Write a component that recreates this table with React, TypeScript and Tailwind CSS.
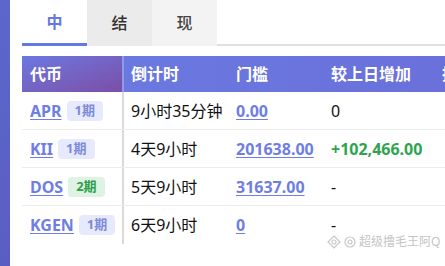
import React from 'react';

interface Row {
  token: string;
  phase: string;
  green?: boolean;
  countdown: string;
  threshold: string;
  change: string;
}

const rows: Row[] = [
  { token: 'APR', phase: '1期', countdown: '9小时35分钟', threshold: '0.00', change: '0' },
  { token: 'KII', phase: '1期', countdown: '4天9小时', threshold: '201638.00', change: '+102,466.00' },
  { token: 'DOS', phase: '2期', green: true, countdown: '5天9小时', threshold: '31637.00', change: '-' },
  { token: 'KGEN', phase: '1期', countdown: '6天9小时', threshold: '0', change: '-' },
];

const font = { fontFamily: '"Noto Sans", "Noto Sans CJK SC", sans-serif' };

const App: React.FC = () => {
  return (
    <div className="relative flex w-[445px] h-[266px] overflow-hidden bg-white" style={font}>
      <div className="w-[10px] h-full shrink-0 bg-gradient-to-b from-[#5c66cb] to-[#5a5ec4]" />

      <div className="flex-1 pl-[12px] overflow-hidden">
        {/* tabs */}
        <div className="flex h-[46px] w-[600px]">
          <div className="w-[65px] flex items-center justify-center border-b-[3px] border-[#6478e4] text-[16px] font-bold text-[#6478e4]">
            中
          </div>
          <div className="w-[65px] flex items-center justify-center bg-[#ebebeb] text-[16px] font-medium text-[#333]">
            结
          </div>
          <div className="w-[65px] flex items-center justify-center bg-[#f3f3f3] text-[16px] font-medium text-[#444]">
            现
          </div>
          <div className="flex-1 border-b-2 border-[#e0e0e0]" />
        </div>

        {/* table */}
        <div className="mt-[10px] w-[600px]">
          <div className="flex h-[36px] text-[16px] font-bold text-white bg-gradient-to-r from-[#6a7be2] to-[#6a6cd6]">
            <div className="w-[100px] flex items-center pl-[8px] bg-gradient-to-br from-[#6a78e2] to-[#7a4ea6]">代币</div>
            <div className="w-[2px] bg-[#8e9aea]" />
            <div className="w-[104px] flex items-center pl-[7px]">倒计时</div>
            <div className="w-[95px] flex items-center pl-[8px]">门槛</div>
            <div className="w-[111px] flex items-center pl-[8px]">较上日增加</div>
            <div className="flex-1 flex items-center pl-[8px]">持有</div>
          </div>

          {rows.map((r, i) => (
            <div
              key={r.token}
              className={`flex h-[38px] text-[16px] text-[#111] ${i < rows.length - 1 ? 'border-b border-[#ececec]' : ''}`}
            >
              <div className="w-[100px] flex items-center pl-[8px] gap-[5px]">
                <span className="font-bold text-[#6e7ee4] underline underline-offset-2">{r.token}</span>
                <span
                  className={`h-[20px] px-[8px] flex items-center rounded-[4px] text-[13px] font-bold ${
                    r.green ? 'bg-[#def3e3] text-[#2f9e4c]' : 'bg-[#e7eafc] text-[#7d8bd8]'
                  }`}
                >
                  {r.phase}
                </span>
              </div>
              <div className="w-[2px] bg-[#dadada]" />
              <div className="w-[104px] flex items-center pl-[7px]">{r.countdown}</div>
              <div className="w-[95px] flex items-center pl-[8px]">
                <span className="font-bold text-[#6e7ee4] underline underline-offset-2">{r.threshold}</span>
              </div>
              <div
                className={`w-[111px] flex items-center pl-[8px] ${
                  r.change.startsWith('+') ? 'font-bold text-[#2ea44f]' : ''
                }`}
              >
                {r.change}
              </div>
              <div className="flex-1" />
            </div>
          ))}
        </div>
      </div>

      {/* watermark */}
      <div className="absolute left-[327px] top-[233px] flex items-center gap-[3px] whitespace-nowrap text-[12px] text-[#c4c4c4]">
        <svg width="14" height="14" viewBox="0 0 14 14" fill="none" stroke="#c8c8c8" strokeWidth="1.2">
          <path d="M7 1 L13 7 L7 13 L1 7 Z" />
          <circle cx="7" cy="7" r="2" />
        </svg>
        <svg width="12" height="12" viewBox="0 0 12 12" fill="none" stroke="#c8c8c8" strokeWidth="1.2">
          <circle cx="6" cy="6" r="5" />
          <circle cx="6" cy="6" r="2" />
        </svg>
        <span>超级撸毛王阿Q</span>
      </div>
    </div>
  );
};

export default App;
